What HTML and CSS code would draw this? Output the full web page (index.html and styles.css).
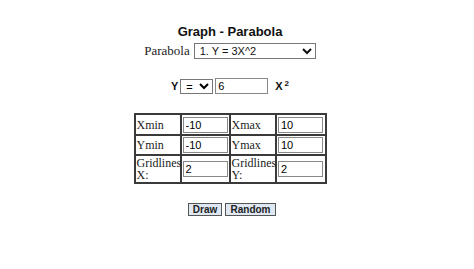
FILE: index.html
```html
<!DOCTYPE html>
<html>
<head>
<meta charset="utf-8">
<link rel="stylesheet" href="styles.css">
</head>
<body>
<div class="page">
  <h1 class="title">Graph - Parabola</h1>
  <div class="row-parabola">
    <span class="label">Parabola</span>
    <select class="sel-main"><option>1. Y = 3X^2</option></select>
  </div>
  <div class="row-eq">
    <span class="bold">Y</span>
    <select class="sel-op"><option>=</option></select>
    <input class="inp-coef" type="text" value="6">
    <span class="bold xterm">X<sup>2</sup></span>
  </div>
  <table class="grid">
    <colgroup><col class="c1"><col class="c2"><col class="c3"><col class="c4"></colgroup>
    <tr class="r1"><td>Xmin</td><td><input class="inp" type="text" value="-10"></td><td>Xmax</td><td><input class="inp" type="text" value="10"></td></tr>
    <tr class="r2"><td>Ymin</td><td><input class="inp" type="text" value="-10"></td><td>Ymax</td><td><input class="inp" type="text" value="10"></td></tr>
    <tr class="r3"><td>Gridlines X:</td><td><input class="inp" type="text" value="2"></td><td>Gridlines Y:</td><td><input class="inp" type="text" value="2"></td></tr>
  </table>
  <div class="buttons">
    <button class="btn btn-draw">Draw</button>
    <button class="btn btn-random">Random</button>
  </div>
</div>
</body>
</html>
```
FILE: styles.css
```css
html, body {
  margin: 0;
  padding: 0;
  background: #fff;
}
.page {
  width: 460px;
  display: flex;
  flex-direction: column;
  align-items: center;
  padding-top: 24px;
  font-family: "Liberation Sans", Arial, sans-serif;
  color: #111;
}
.title {
  margin: 0;
  font-size: 13px;
  line-height: 16px;
  font-weight: bold;
  color: #111;
}
.row-parabola {
  margin-top: 3px;
  display: flex;
  align-items: center;
  gap: 4px;
  height: 16px;
}
.label {
  font-family: "Liberation Serif", "Times New Roman", serif;
  font-size: 13px;
  line-height: 16px;
  color: #222;
}
.sel-main {
  width: 122px;
  height: 16px;
  font-family: "Liberation Sans", Arial, sans-serif;
  font-size: 11px;
  padding: 0 1px;
  border: 1px solid #777;
  border-radius: 0;
  background: #fff;
  color: #111;
}
.row-eq {
  margin-top: 19px;
  display: flex;
  align-items: center;
  gap: 2px;
  height: 16px;
}
.bold {
  font-weight: bold;
  font-size: 11px;
  line-height: 16px;
}
.sel-op {
  width: 33px;
  height: 15px;
  font-family: "Liberation Sans", Arial, sans-serif;
  font-size: 11px;
  padding: 0 1px;
  border: 1px solid #777;
  border-radius: 0;
  background: #fff;
}
.inp-coef {
  width: 53px;
  height: 16px;
  box-sizing: border-box;
  border: 1px solid #888;
  padding: 0 2px;
  font-family: "Liberation Sans", Arial, sans-serif;
  font-size: 11px;
}
.xterm {
  margin-left: 5px;
}
.xterm sup {
  font-size: 8px;
  margin-left: 2px;
  vertical-align: 4px;
  line-height: 0;
}
.grid {
  margin-top: 19px;
  border-collapse: collapse;
  table-layout: fixed;
  width: 191px;
  border: 2px solid #3a3a3a;
}
.c1 { width: 46px; }
.c2 { width: 49px; }
.c3 { width: 46px; }
.c4 { width: 50px; }
.grid td {
  border: 2px solid #3a3a3a;
  padding: 0 1px;
  font-family: "Liberation Serif", "Times New Roman", serif;
  font-size: 12px;
  line-height: 12px;
  color: #222;
  vertical-align: middle;
}
.r1 { height: 21px; }
.r2 { height: 20px; }
.r3 { height: 28px; }
.inp {
  width: 45px;
  height: 16px;
  box-sizing: border-box;
  border: 1px solid #888;
  padding: 0 2px;
  font-family: "Liberation Sans", Arial, sans-serif;
  font-size: 11px;
  display: block;
  margin: 0 auto;
}
.buttons {
  margin-top: 19px;
  display: flex;
  gap: 3px;
  padding-left: 4px;
}
.btn {
  height: 13px;
  box-sizing: border-box;
  padding: 0;
  border: 1px solid #555;
  border-radius: 0;
  background: #dfe8f2;
  font-family: "Liberation Sans", Arial, sans-serif;
  font-size: 10px;
  font-weight: bold;
  line-height: 11px;
  color: #222;
}
.btn-draw { width: 34px; }
.btn-random { width: 51px; }
```
